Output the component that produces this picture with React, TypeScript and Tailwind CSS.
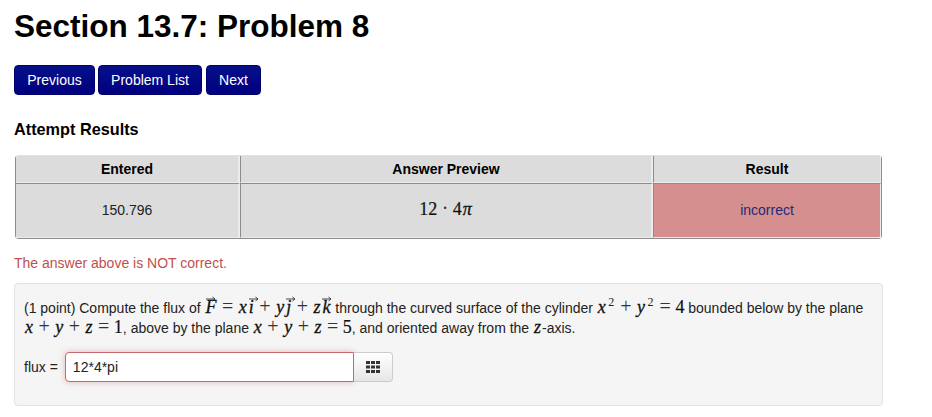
import { ReactNode } from "react";

const serif = "font-['Liberation_Serif',serif]";

function V({ children }: { children: ReactNode }) {
  // italic math letter
  return <span className={`${serif} px-[1px] text-[18px] italic leading-[0] text-[#111] [-webkit-text-stroke:0.3px_#111]`}>{children}</span>;
}

function N({ children }: { children: ReactNode }) {
  return <span className={`${serif} text-[18px] leading-[0] text-[#111] [-webkit-text-stroke:0.2px_#111]`}>{children}</span>;
}

function Op({ children }: { children: ReactNode }) {
  return <span className={`${serif} mx-[4.5px] text-[20px] leading-[0] text-[#333]`}>{children}</span>;
}

function Sup({ children }: { children: ReactNode }) {
  return <span className={`${serif} relative top-[-7px] px-[1.5px] text-[12px] leading-[0]`}>{children}</span>;
}

function Vec({ children }: { children: ReactNode }) {
  return (
    <span className="relative inline-block">
      <svg className="absolute left-[1px] top-[-2px]" width="10" height="6" viewBox="0 0 10 6">
        <path d="M0 3h9M6.5 1l2.5 2-2.5 2" fill="none" stroke="#333" strokeWidth="0.9" />
      </svg>
      {children}
    </span>
  );
}

const X = () => <V>x</V>;
const Y = () => <V>y</V>;
const Z = () => <V>z</V>;

const navBtn = "h-[30px] rounded-[4px] border border-[#00006a] bg-gradient-to-b from-[#08108a] to-[#000080] text-[14px] text-white";

export default function App() {
  return (
    <div className="h-[417px] w-[932px] overflow-hidden bg-white pl-[14px] font-['Liberation_Sans',Arial,sans-serif] text-[14px] leading-[20px] text-[#222]">
      <h1 className="pt-[6px] text-[31.5px] font-bold leading-[40px] text-black">Section 13.7: Problem 8</h1>

      <div className="mt-[19px] flex gap-[3px]">
        <button className={`${navBtn} w-[81px]`}>Previous</button>
        <button className={`${navBtn} w-[104px]`}>Problem List</button>
        <button className={`${navBtn} ml-[1px] w-[55px]`}>Next</button>
      </div>

      <h2 className="mt-[24px] text-[16.25px] font-bold leading-[20px] text-black">Attempt Results</h2>

      <div className="ml-[1px] mt-[16px] w-[867px] rounded-[4px] border border-[#8c8c8c] border-t-[#e2e2e2] bg-white">
        <div className="grid grid-cols-[224px_413px_228px] grid-rows-[27px_55px] text-center">
          <div className="flex items-center justify-center border-b border-r-2 border-[#ececec] bg-[#dcdcdc] pb-[1px] font-bold text-black">Entered</div>
          <div className="flex items-center justify-center border-b border-l border-r-2 border-[#ececec] border-l-[#8c8c8c] bg-[#dcdcdc] pb-[1px] font-bold text-black">Answer Preview</div>
          <div className="flex items-center justify-center border-b border-l border-r border-[#ececec] border-l-[#8c8c8c] bg-[#dcdcdc] pb-[1px] font-bold text-black">Result</div>
          <div className="flex items-center justify-center border-b border-r-2 border-t border-[#ececec] border-t-[#8c8c8c] bg-[#dcdcdc] pb-[1px]">150.796</div>
          <div className="flex items-center justify-center border-b border-l border-r-2 border-t border-[#ececec] border-l-[#8c8c8c] border-t-[#8c8c8c] bg-[#dcdcdc] pb-[1px] text-black">
            <span><N>12</N><Op>·</Op><N>4</N><V>π</V></span>
          </div>
          <div className="flex items-center justify-center border-b border-l border-r border-t border-[#ececec] border-l-[#8c8c8c] border-t-[#8c8c8c] bg-[#d68f8f] pb-[1px] text-[#1c2a78]">incorrect</div>
        </div>
      </div>

      <p className="mt-[14px] text-[#c0504d]">The answer above is NOT correct.</p>

      <div className="mt-[10px] h-[123px] w-[869px] rounded-[4px] border border-[#e3e3e3] bg-[#f5f5f5] pl-[9px] pt-[14px]">
        <p className="whitespace-nowrap">
          (1 point) Compute the flux of{" "}
          <Vec><V>F</V></Vec><Op>=</Op><X /><Vec><V>i</V></Vec><Op>+</Op><Y /><Vec><V>j</V></Vec><Op>+</Op><Z /><Vec><V>k</V></Vec>{" "}
          through the curved surface of the cylinder{" "}
          <X /><Sup>2</Sup><Op>+</Op><Y /><Sup>2</Sup><Op>=</Op><N>4</N>{" "}
          bounded below by the plane
        </p>
        <p className="whitespace-nowrap">
          <X /><Op>+</Op><Y /><Op>+</Op><Z /><Op>=</Op><N>1</N>, above by the plane{" "}
          <X /><Op>+</Op><Y /><Op>+</Op><Z /><Op>=</Op><N>5</N>, and oriented away from the <Z />-axis.
        </p>
        <div className="mt-[14px] flex items-center">
          <span className="mr-[7px]">flux =</span>
          <div className="flex h-[30px] w-[289px] items-center rounded-l-[4px] border border-[#c9686a] bg-white pl-[7px] shadow-[0_0_6px_rgba(185,74,72,0.35)]">12*4*pi</div>
          <div className="flex h-[30px] w-[39px] items-center justify-center rounded-r-[4px] border border-l-0 border-[#ccc] bg-gradient-to-b from-white to-[#e6e6e6]">
            <svg width="14" height="12" viewBox="0 0 14 12" fill="#333">
              <rect x="0" y="0" width="4" height="3" /><rect x="5" y="0" width="4" height="3" /><rect x="10" y="0" width="4" height="3" />
              <rect x="0" y="4.5" width="4" height="3" /><rect x="5" y="4.5" width="4" height="3" /><rect x="10" y="4.5" width="4" height="3" />
              <rect x="0" y="9" width="4" height="3" /><rect x="5" y="9" width="4" height="3" /><rect x="10" y="9" width="4" height="3" />
            </svg>
          </div>
        </div>
      </div>
    </div>
  );
}
